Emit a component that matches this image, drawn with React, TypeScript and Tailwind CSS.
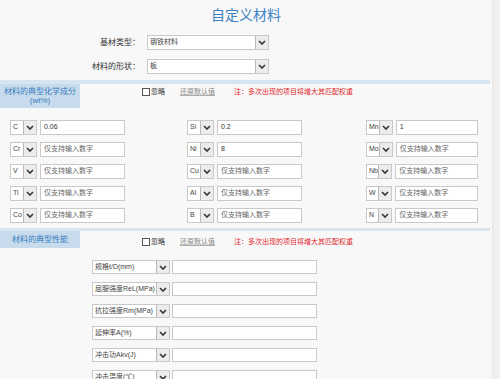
import React from 'react';

const font = "font-['Liberation_Sans','Noto_Sans_CJK_SC',sans-serif]";

const Chevron: React.FC = () => (
  <svg width="8" height="5" viewBox="0 0 8 5" className="block">
    <path d="M1 1 L4 4 L7 1" fill="none" stroke="#333" strokeWidth="1.6" />
  </svg>
);

interface SelectProps {
  value: string;
  width: string;
}

// old-style select with a grey arrow box on the right
const FakeSelect: React.FC<SelectProps> = ({ value, width }) => (
  <div className={`${width} h-full flex bg-white border border-[#c9c9c9]`}>
    <div className="flex-1 flex items-center pl-[2px] text-[7px] text-[#444] overflow-hidden whitespace-nowrap">{value}</div>
    <div className="w-[13px] flex items-center justify-center bg-[#ececec] border-l border-[#b9b9b9]">
      <Chevron />
    </div>
  </div>
);

const elements = [
  [['C', '0.06'], ['Si', '0.2'], ['Mn', '1']],
  [['Cr', ''], ['Ni', '8'], ['Mo', '']],
  [['V', ''], ['Cu', ''], ['Nb', '']],
  [['Ti', ''], ['Al', ''], ['W', '']],
  [['Co', ''], ['B', ''], ['N', '']],
];

const props = ['规格t/D(mm)', '屈服强度ReL(MPa)', '抗拉强度Rm(MPa)', '延伸率A(%)', '冲击功Akv(J)', '冲击温度(℃)'];

const colWidths = ['w-[177px]', 'w-[179px]', 'w-[112px]'];

const Controls: React.FC = () => (
  <div className="flex items-center h-[10px] text-[7px]">
    <div className="ml-[62px] w-[8px] h-[8px] border border-[#555] bg-white" />
    <span className="ml-[1px] text-[#333]">忽略</span>
    <span className="ml-[15px] text-[#8a8a8a] underline decoration-[#aaa]">还原默认值</span>
    <span className="ml-[19px] text-[#e0262b]">注：多次出现的项目将增大其匹配权重</span>
  </div>
);

const App: React.FC = () => {
  return (
    <div className={`w-[500px] h-[379px] overflow-hidden bg-[#efefef] ${font}`}>
      <div className="w-[493px] h-full bg-[#f8f8f8] border-r border-[#e6e6e6]">
        <div className="h-[28px] pt-[2px] flex items-center justify-center text-[14px] text-[#3f83c6]">自定义材料</div>

        <div className="mt-[7px] h-[15px] flex items-center">
          <div className="w-[140px] text-right text-[8px] text-[#333]">基材类型：</div>
          <div className="ml-[7px] h-full">
            <FakeSelect value="钢铁材料" width="w-[122px]" />
          </div>
        </div>
        <div className="mt-[9px] h-[15px] flex items-center">
          <div className="w-[140px] text-right text-[8px] text-[#333]">材料的形状：</div>
          <div className="ml-[7px] h-full">
            <FakeSelect value="板" width="w-[122px]" />
          </div>
        </div>

        <div className="mt-[6px] h-[4px] w-[490px] bg-[#d6e5f0]" />
        <div className="flex items-start h-[24px]">
          <div className="w-[80px] h-full bg-[#c7dbec] flex flex-col items-center pt-[3px] text-[8px] leading-[9px] text-[#3a7dc2]">
            <span>材料的典型化学成分</span>
            <span>(wt%)</span>
          </div>
          <div className="mt-[3px]">
            <Controls />
          </div>
        </div>

        <div className="mt-[12px] pl-[10px] flex flex-col gap-[7px]">
          {elements.map((row, i) => (
            <div key={i} className="flex h-[15px]">
              {row.map(([sym, val], j) => (
                <div key={sym} className={`${colWidths[j]} flex h-full`}>
                  <FakeSelect value={sym} width="w-[27px]" />
                  <div className={`ml-[3px] w-[85px] h-full bg-white border border-[#c9c9c9] flex items-center pl-[3px] text-[7px] ${val ? 'text-[#333]' : 'text-[#666]'}`}>
                    {val || '仅支持输入数字'}
                  </div>
                </div>
              ))}
            </div>
          ))}
        </div>

        <div className="mt-[5px] h-[3px] w-[490px] bg-[#d6e5f0]" />
        <div className="flex items-start h-[17px]">
          <div className="w-[80px] h-full bg-[#c7dbec] flex items-center justify-center text-[8px] text-[#3a7dc2]">材料的典型性能</div>
          <div className="mt-[6px]">
            <Controls />
          </div>
        </div>

        <div className="mt-[12px] pl-[92px] flex flex-col gap-[8px]">
          {props.map((p) => (
            <div key={p} className="flex h-[14px]">
              <FakeSelect value={p} width="w-[78px]" />
              <div className="ml-[2px] w-[145px] h-full bg-white border border-[#c9c9c9]" />
            </div>
          ))}
        </div>
      </div>
    </div>
  );
};

export default App;
